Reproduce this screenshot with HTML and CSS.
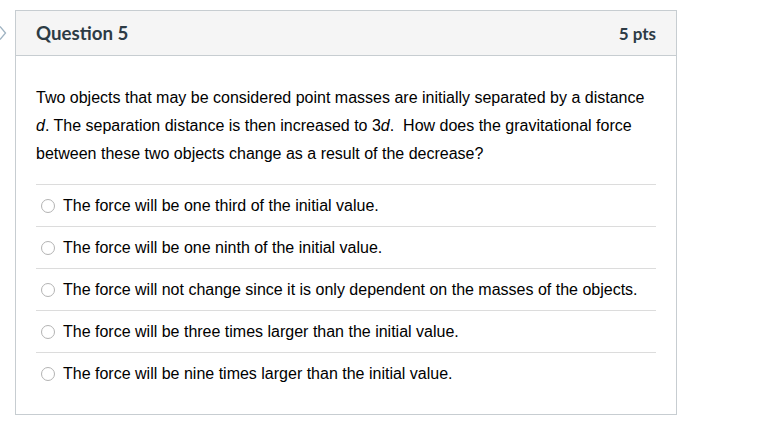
FILE: index.html
```html
<!DOCTYPE html>
<html>
<head>
<meta charset="utf-8">
<link rel="stylesheet" href="styles.css">
</head>
<body>
<div class="page">
  <svg class="chevron" width="8" height="16" viewBox="0 0 8 16"><path d="M0 1.5 L5.5 8 L0 14.5" fill="none" stroke="#9fb3c2" stroke-width="1.3"/></svg>
  <div class="question">
    <div class="q-header">
      <span class="q-title">Question 5</span>
      <span class="q-points">5 pts</span>
    </div>
    <div class="q-body">
      <p class="q-text">Two objects that may be considered point masses are initially separated by a distance <i>d</i>. The separation distance is then increased to 3<i>d</i>.&nbsp; How does the gravitational force between these two objects change as a result of the decrease?</p>
      <ul class="answers">
        <li class="answer"><span class="radio"></span>The force will be one third of the initial value.</li>
        <li class="answer"><span class="radio"></span>The force will be one ninth of the initial value.</li>
        <li class="answer"><span class="radio"></span>The force will not change since it is only dependent on the masses of the objects.</li>
        <li class="answer"><span class="radio"></span>The force will be three times larger than the initial value.</li>
        <li class="answer"><span class="radio"></span>The force will be nine times larger than the initial value.</li>
      </ul>
    </div>
  </div>
</div>
</body>
</html>
```
FILE: styles.css
```css
html, body {
  margin: 0;
  padding: 0;
  background: #fff;
}
.page {
  position: relative;
  padding: 10px 0 0 15px;
}
.chevron {
  position: absolute;
  left: 0;
  top: 25px;
}
.question {
  width: 660px;
  border: 1px solid #c7cdd1;
}
.q-header {
  height: 44px;
  background: #f5f5f5;
  border-bottom: 1px solid #c7cdd1;
  display: flex;
  align-items: center;
  justify-content: space-between;
  padding: 0 20px 0 20px;
  font-family: Lato, "Liberation Sans", sans-serif;
  font-weight: 700;
  color: #2d3b45;
}
.q-title {
  font-size: 18.7px;
}
.q-points {
  font-size: 17px;
  font-weight: 700;
  color: #2d3b45;
}
.q-body {
  padding: 28px 20px 20px 20px;
  font-family: "Liberation Sans", Arial, sans-serif;
  font-size: 16px;
  color: #000;
}
.q-text {
  margin: 0 0 16px 0;
  line-height: 28px;
}
.answers {
  list-style: none;
  margin: 0;
  padding: 0;
}
.answer {
  border-top: 1px solid #dcdcdc;
  height: 41px;
  display: flex;
  align-items: center;
  line-height: 20px;
}
.radio {
  width: 14px;
  height: 14px;
  border: 1px solid #b3b3b3;
  border-radius: 50%;
  margin: 0 8px 0 5px;
  box-sizing: border-box;
  flex: none;
}
```
